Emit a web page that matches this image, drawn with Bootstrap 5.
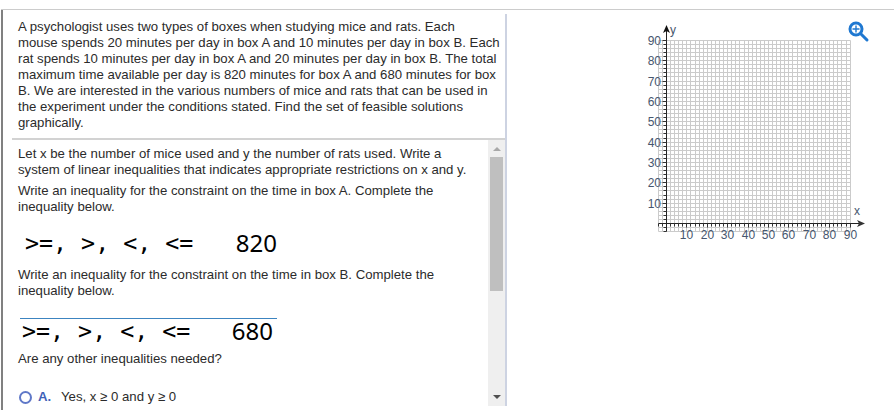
<!DOCTYPE html>
<html lang="en">
<head>
  <meta charset="UTF-8">
  <title>Feasible solutions</title>
  <link href="https://cdn.jsdelivr.net/npm/bootstrap@5.3.0/dist/css/bootstrap.min.css" rel="stylesheet">
  <style>
    html, body { height: 410px; overflow: hidden; }
    body { background: #fff; color: #2b2b2b; font-family: "Liberation Sans", Arial, sans-serif; font-size: 13.2px; line-height: 16px; }
    .top-strip { height: 10px; margin-left: 1px; border-bottom: 1px solid #ccc; }
    .work-area { height: 400px; margin-left: 1px; border-left: 2px solid #808080; }
    .left-pane { width: 504px; margin-top: 4px; height: 392px; border-right: 2px solid #cdd3e2; }
    .q-text { padding: 5px 0 0 6px; border-bottom: 2px solid #d2d2d2; margin-left: 9px; height: 126px; white-space: nowrap; }
    .q-text p { margin: 0; }
    .scroll-area { height: 266px; }
    .scroll-body { width: 478px; padding: 6px 0 0 15px; white-space: nowrap; }
    .scroll-body p { margin: 0; }
    .gap-b { margin-bottom: 5px !important; }
    .answer-row { font-family: "Noto Sans", "Open Sans", sans-serif; font-size: 24px; color: #000; white-space: pre; }
    .answer-a { margin: 13px 0 9px 7px; width: 252px; height: 30px; line-height: 30px; }
    .answer-b { margin: 19px 0 0 2px; width: 257px; height: 33px; line-height: 24px; padding: 0 4px 0 2px; border-top: 1px solid #3c84c0; }
    .ops { font-family: "DejaVu Sans Mono", "Liberation Mono", monospace; font-size: 23.3px; }
    .choice { margin-top: 22px; }
    .radio-ring { width: 13px; height: 13px; border: 2px solid #5f78c8; border-radius: 50%; margin: 0 6px 0 1px; }
    .choice-key { color: #3f62b8; font-weight: 700; width: 23px; }
    .bar-col { width: 17px; background: #efefef; }
    .bar-thumb { width: 13px; height: 134px; background: #bfbfbf; margin: 6px auto 0; }
    .arrow-up, .arrow-down { width: 0; height: 0; margin: 0 auto; border-left: 4px solid transparent; border-right: 4px solid transparent; }
    .arrow-up { margin-top: 7px; border-bottom: 4px solid #a8a8a8; }
    .arrow-down { margin-top: auto; margin-bottom: 7px; border-top: 4px solid #505050; }
    .graph-pane { padding: 0 0 0 140px; }
    .graph-pane svg { display: block; }
    .g-label { font-family: "Liberation Sans", Arial, sans-serif; font-size: 12px; fill: #46566e; }
  </style>
</head>
<body>
  <div class="top-strip"></div>
  <div class="work-area d-flex">
    <div class="left-pane d-flex flex-column flex-shrink-0">
      <div class="q-text">
        <p>A psychologist uses two types of boxes when studying mice and rats. Each<br>mouse spends 20 minutes per day in box A and 10 minutes per day in box B. Each<br>rat spends 10 minutes per day in box A and 20 minutes per day in box B. The total<br>maximum time available per day is 820 minutes for box A and 680 minutes for box<br>B. We are interested in the various numbers of mice and rats that can be used in<br>the experiment under the conditions stated. Find the set of feasible solutions<br>graphically.</p>
      </div>
      <div class="scroll-area d-flex justify-content-between overflow-hidden">
        <div class="scroll-body">
          <p class="gap-b">Let x be the number of mice used and y the number of rats used. Write a<br>system of linear inequalities that indicates appropriate restrictions on x and y.</p>
          <p>Write an inequality for the constraint on the time in box A. Complete the<br>inequality below.</p>
          <div class="answer-row answer-a d-flex justify-content-between"><span class="ops">&gt;=, &gt;, &lt;, &lt;=</span><span>820</span></div>
          <p>Write an inequality for the constraint on the time in box B. Complete the<br>inequality below.</p>
          <div class="answer-row answer-b d-flex justify-content-between"><span class="ops">&gt;=, &gt;, &lt;, &lt;=</span><span>680</span></div>
          <p>Are any other inequalities needed?</p>
          <div class="choice d-flex align-items-center">
            <span class="radio-ring"></span>
            <span class="choice-key">A.</span>
            <span>Yes, x ≥ 0 and y ≥ 0</span>
          </div>
        </div>
        <div class="bar-col d-flex flex-column flex-shrink-0">
          <div class="arrow-up"></div>
          <div class="bar-thumb"></div>
          <div class="arrow-down"></div>
        </div>
      </div>
    </div>
    <div class="graph-pane flex-grow-1">
      <svg id="graph" width="248" height="250" viewBox="647 10 248 250" aria-label="Empty coordinate grid"></svg>
    </div>
  </div>

  <script>
    // grid goes from -4 to 90 on both axes, lines every 2 units
    const svg = document.getElementById("graph");
    const X0 = 666.5, Y0 = 223.5, SX = 2.04, SY = 2.035;
    const px = v => Math.round(X0 + v * SX - 0.5) + 0.5;
    const py = v => Math.round(Y0 - v * SY - 0.5) + 0.5;
    let out = "";
    for (let v = -4; v <= 90; v += 2) {
      out += `<line x1="${px(v)}" y1="${py(90)}" x2="${px(v)}" y2="${py(-4)}" stroke="#cbcbcb"/>`;
      out += `<line x1="${px(-4)}" y1="${py(v)}" x2="${px(90)}" y2="${py(v)}" stroke="#cbcbcb"/>`;
    }
    out += `<line x1="${X0}" y1="27" x2="${X0}" y2="${py(-4)}" stroke="#222"/>`;
    out += `<line x1="${px(-4)}" y1="${Y0}" x2="860" y2="${Y0}" stroke="#222"/>`;
    out += `<path d="M${X0} 25 l-3.5 8 3.5 -2 3.5 2z" fill="#111"/>`;
    out += `<path d="M865 ${Y0} l-8 -3.5 2 3.5 -2 3.5z" fill="#333"/>`;
    for (let v = -4; v <= 90; v += 2) {
      if (v === 0) continue;
      const big = v % 10 === 0;
      out += `<line x1="${X0 - (big ? 4 : 3)}" y1="${py(v)}" x2="${X0}" y2="${py(v)}" stroke="#333"/>`;
      out += `<line x1="${px(v)}" y1="${Y0}" x2="${px(v)}" y2="${Y0 + (big ? 4 : 3)}" stroke="#333"/>`;
    }
    for (let v = 10; v <= 90; v += 10) {
      out += `<text class="g-label" x="${px(v)}" y="239" text-anchor="middle">${v}</text>`;
      out += `<text class="g-label" x="661" y="${py(v) + 4}" text-anchor="end">${v}</text>`;
    }
    out += `<text class="g-label" x="670" y="34">y</text>`;
    out += `<text class="g-label" x="854" y="215">x</text>`;
    // zoom-in button
    out += `<g fill="none" stroke="#1f78d1"><circle cx="856" cy="29" r="6" stroke-width="3"/><path d="M861 34 l6 6" stroke-width="3" stroke-linecap="round"/><path d="M856 25.5v7M852.5 29h7" stroke-width="1.4"/></g>`;
    svg.innerHTML = out;
  </script>
  <script src="https://cdn.jsdelivr.net/npm/bootstrap@5.3.0/dist/js/bootstrap.bundle.min.js"></script>
</body>
</html>
